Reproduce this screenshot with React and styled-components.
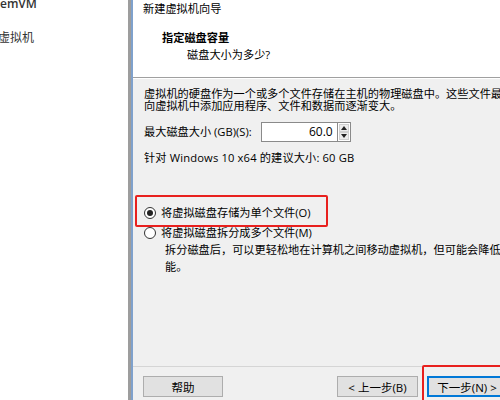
import styled, { createGlobalStyle } from "styled-components";

const GlobalStyle = createGlobalStyle`
  html, body {
    margin: 0;
    padding: 0;
    background: #ffffff;
    overflow: hidden;
  }
  * {
    box-sizing: border-box;
  }
`;

const FONT = `"Open Sans", "Noto Sans CJK SC", sans-serif`;

const Page = styled.div`
  display: flex;
  width: 500px;
  height: 400px;
  overflow: hidden;
  font-family: ${FONT};
  font-size: 11.2px;
  color: #000;
`;

const Sidebar = styled.div`
  width: 128px;
  flex-shrink: 0;
  background: #fff;
  display: flex;
  flex-direction: column;
`;

const SideItem = styled.div`
  font-size: 12px;
  line-height: 14px;
  color: #333;
  white-space: nowrap;
  font-weight: ${(p) => (p.$bold ? 600 : 400)};
  margin-top: ${(p) => p.$top}px;
  margin-left: ${(p) => p.$left || 0}px;
`;

const Dialog = styled.div`
  width: 430px;
  flex-shrink: 0;
  display: flex;
  flex-direction: column;
  border-left: 3px solid #9d9d9d;
  box-shadow: inset 2px 0 0 #7fa1cc;
  padding-left: 2px;
  background: #f0f0f0;
`;

const Header = styled.div`
  height: 78px;
  background: #fff;
  border-bottom: 1px solid #a0a0a0;
  box-shadow: 0 1px 0 #fff;
  display: flex;
  flex-direction: column;
  padding-left: 10px;
`;

const Title = styled.div`
  margin-top: 2px;
  line-height: 13px;
`;

const Heading = styled.div`
  margin-top: 16px;
  margin-left: 19px;
  font-weight: 700;
  line-height: 13px;
`;

const SubHeading = styled.div`
  margin-top: 4px;
  margin-left: 44px;
  line-height: 13px;
`;

const Body = styled.div`
  flex: 1;
  display: flex;
  flex-direction: column;
  padding: 10px 0 0 11px;
`;

const Paragraph = styled.div`
  line-height: 12px;
  white-space: nowrap;
`;

const SizeRow = styled.div`
  display: flex;
  align-items: center;
  gap: 9px;
  margin-top: 10px;
  height: 20px;
  line-height: 14px;
`;

const Spin = styled.div`
  display: flex;
  height: 20px;
`;

const SpinInput = styled.div`
  width: 76px;
  height: 20px;
  background: #fff;
  border: 1px solid #8a8a8a;
  border-right: none;
  text-align: right;
  padding-right: 4px;
  font-size: 12px;
  line-height: 18px;
`;

const SpinButtons = styled.div`
  width: 14px;
  display: flex;
  flex-direction: column;
  border: 1px solid #8a8a8a;
  background: #fff;
`;

const SpinButton = styled.div`
  flex: 1;
  display: flex;
  align-items: center;
  justify-content: center;
  background: #ececec;
  border: 1px solid #d0d0d0;
  margin: 0 1px;
  &:first-child {
    margin-top: 1px;
  }
  &:last-child {
    margin-bottom: 1px;
  }
  &::after {
    content: "";
    border-left: 3px solid transparent;
    border-right: 3px solid transparent;
    ${(p) =>
      p.$up ? "border-bottom: 4px solid #222;" : "border-top: 4px solid #222;"}
  }
`;

const Hint = styled.div`
  margin-top: 9px;
  line-height: 13px;
  letter-spacing: 0.15px;
`;

const RadioRow = styled.label`
  position: relative;
  display: flex;
  align-items: center;
  gap: 5px;
  height: 16px;
  line-height: 16px;
  margin-top: ${(p) => p.$top}px;
  width: fit-content;
  ${(p) =>
    p.$marked &&
    `&::after {
      content: "";
      position: absolute;
      left: -9px;
      right: -17px;
      top: -10px;
      bottom: -6px;
      border: 2.5px solid #e8201e;
      border-radius: 2px;
    }`}
`;

const RadioDot = styled.span`
  width: 12px;
  height: 12px;
  border-radius: 50%;
  border: 1px solid #333;
  background: #fff;
  display: flex;
  align-items: center;
  justify-content: center;
  &::after {
    content: "";
    width: 6px;
    height: 6px;
    border-radius: 50%;
    background: ${(p) => (p.$checked ? "#222" : "transparent")};
  }
`;

const Description = styled.div`
  margin-top: 0;
  margin-left: 21px;
  line-height: 17px;
  white-space: nowrap;
`;

const Footer = styled.div`
  height: 34px;
  border-top: 1px solid #d5d5d5;
  display: flex;
  align-items: flex-start;
  padding: 9px 0 0 10px;
`;

const Button = styled.div`
  position: relative;
  width: ${(p) => p.$w}px;
  height: 21px;
  margin-left: ${(p) => p.$gap || 0}px;
  flex-shrink: 0;
  background: #e1e1e1;
  border: ${(p) => (p.$focus ? "2px solid #0078d7" : "1px solid #adadad")};
  display: flex;
  align-items: center;
  justify-content: center;
  font-size: 11.5px;
  white-space: nowrap;
  ${(p) =>
    p.$marked &&
    `&::after {
      content: "";
      position: absolute;
      left: -7px;
      top: -13px;
      width: 120px;
      height: 60px;
      border: 2.5px solid #e8201e;
      border-radius: 2px;
    }`}
`;

export default function App() {
  return (
    <>
      <GlobalStyle />
      <Page>
        <Sidebar>
          <SideItem $bold $top={-3}>
            emVM
          </SideItem>
          <SideItem $top={20} $left={-2}>
            虚拟机
          </SideItem>
        </Sidebar>
        <Dialog>
          <Header>
            <Title>新建虚拟机向导</Title>
            <Heading>指定磁盘容量</Heading>
            <SubHeading>磁盘大小为多少?</SubHeading>
          </Header>
          <Body>
            <Paragraph>
              虚拟机的硬盘作为一个或多个文件存储在主机的物理磁盘中。这些文件最初很小，随着您
              <br />
              向虚拟机中添加应用程序、文件和数据而逐渐变大。
            </Paragraph>
            <SizeRow>
              <span>最大磁盘大小 (GB)(S):</span>
              <Spin>
                <SpinInput>60.0</SpinInput>
                <SpinButtons>
                  <SpinButton $up />
                  <SpinButton />
                </SpinButtons>
              </Spin>
            </SizeRow>
            <Hint>针对 Windows 10 x64 的建议大小: 60 GB</Hint>
            <RadioRow $top={41} $marked>
              <RadioDot $checked />
              将虚拟磁盘存储为单个文件(O)
            </RadioRow>
            <RadioRow $top={4}>
              <RadioDot />
              将虚拟磁盘拆分成多个文件(M)
            </RadioRow>
            <Description>
              拆分磁盘后，可以更轻松地在计算机之间移动虚拟机，但可能会降低大容量磁盘的性
              <br />
              能。
            </Description>
          </Body>
          <Footer>
            <Button $w={80}>帮助</Button>
            <Button $w={81} $gap={114}>
              &lt; 上一步(B)
            </Button>
            <Button $w={80} $gap={9} $focus $marked>
              下一步(N) &gt;
            </Button>
          </Footer>
        </Dialog>
      </Page>
    </>
  );
}
